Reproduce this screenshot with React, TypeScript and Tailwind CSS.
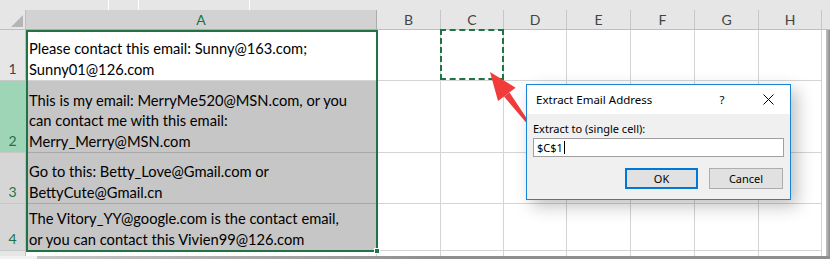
const colWidths = ["w-[26px]"];

type Row = {
  num: string;
  height: string;
  lines: string[];
  head: string;
  cell: string;
};

const rows: Row[] = [
  {
    num: "1",
    height: "h-[51px]",
    lines: ["Please contact this email: Sunny@163.com;", "Sunny01@126.com"],
    head: "bg-[#e6e6e6] text-[#444444]",
    cell: "bg-white border-[#d4d4d4]",
  },
  {
    num: "2",
    height: "h-[72px]",
    lines: [
      "This is my email: MerryMe520@MSN.com, or you",
      "can contact me with this email:",
      "Merry_Merry@MSN.com",
    ],
    head: "bg-[#9fd5b7] text-[#217346]",
    cell: "bg-[#c6c6c6] border-[#a8a8a8]",
  },
  {
    num: "3",
    height: "h-[51px]",
    lines: ["Go to this: Betty_Love@Gmail.com or", "BettyCute@Gmail.cn"],
    head: "bg-[#d6d6d6] text-[#217346]",
    cell: "bg-[#c6c6c6] border-[#a8a8a8]",
  },
  {
    num: "4",
    height: "h-[47px]",
    lines: [
      "The Vitory_YY@google.com is the contact email,",
      "or you can contact this Vivien99@126.com",
    ],
    head: "bg-[#d6d6d6] text-[#217346]",
    cell: "bg-[#c6c6c6] border-[#a8a8a8]",
  },
];

const others = [
  { key: "B", w: "w-[64px]" },
  { key: "C", w: "w-[63px]" },
  { key: "D", w: "w-[63px]" },
  { key: "E", w: "w-[64px]" },
  { key: "F", w: "w-[64px]" },
  { key: "G", w: "w-[64px]" },
  { key: "H", w: "w-[63px]" },
];

function Arrow() {
  return (
    <svg
      className="absolute left-0 top-0 pointer-events-none"
      width="830"
      height="259"
      viewBox="0 0 830 259"
    >
      {/* shaft, tapering toward the dialog */}
      <polygon points="509.5,92.5 504,96.5 531.2,128.6 532.8,127.4" fill="#f23b3b" />
      {/* head */}
      <polygon points="490,72 515.6,87.8 498,101" fill="#f23b3b" />
    </svg>
  );
}

function Dialog() {
  return (
    <div className="absolute left-[526px] top-[84px] w-[265px] h-[116px] border border-[#1883d7] bg-[#f0f0f0] shadow-[6px_6px_16px_rgba(0,0,0,0.25)] font-['Noto_Sans',sans-serif] text-[11px] text-black">
      <div className="h-[29px] bg-white flex items-center pl-[9px] pr-[16px] text-[11.5px]">
        <span className="flex-1 leading-none">Extract Email Address</span>
        <span className="w-[10px] text-center mr-[36px] leading-none">?</span>
        <svg width="11" height="11" viewBox="0 0 11 11">
          <path d="M0.5 0.5 L10.5 10.5 M10.5 0.5 L0.5 10.5" stroke="#000" strokeWidth="1" />
        </svg>
      </div>
      <div className="px-[6px] pt-[8px]">
        <div className="leading-[14px]">Extract to (single cell):</div>
        <div className="mt-[2px] h-[19px] w-[251px] border border-[#a0a0a0] bg-white flex items-center pl-[3px]">
          <span className="leading-none">$C$1</span>
          <span className="ml-[1px] w-px h-[13px] bg-black" />
        </div>
        <div className="mt-[11px] flex justify-end gap-[11px] pr-[1px]">
          <button className="w-[73px] h-[21px] border-2 border-[#0078d7] bg-[#e1e1e1] leading-none">
            OK
          </button>
          <button className="w-[74px] h-[21px] border border-[#adadad] bg-[#e1e1e1] leading-none">
            Cancel
          </button>
        </div>
      </div>
    </div>
  );
}

export default function App() {
  return (
    <div className="relative w-[830px] h-[259px] overflow-hidden bg-white font-['Lato',sans-serif] text-black">
      {/* formula bar remains */}
      <div className="h-[10px] bg-[#e6e6e6] flex">
        <div className="w-[108px]" />
        <div className="w-px bg-white" />
        <div className="w-[29px]" />
        <div className="w-px bg-white" />
        <div className="w-[110px]" />
        <div className="w-px bg-white" />
      </div>

      <div className="flex">
        <div className="flex flex-col">
          {/* column headers */}
          <div className="flex h-[20px] text-[14px]">
            <div className={`${colWidths[0]} relative bg-[#e6e6e6] border-r border-b border-[#bfbfbf]`}>
              <div className="absolute right-[2px] bottom-[2px] w-0 h-0 border-l-[12px] border-l-transparent border-b-[12px] border-b-[#b5b5b5]" />
            </div>
            <div className="w-[351px] bg-[#d2d2d2] border-r border-b border-[#ababab] text-[#217346] flex items-center justify-center">
              A
            </div>
            {others.map((c) => (
              <div
                key={c.key}
                className={`${c.w} bg-[#e6e6e6] border-r border-b border-[#c6c6c6] border-b-[#bfbfbf] text-[#444444] flex items-center justify-center`}
              >
                {c.key}
              </div>
            ))}
          </div>

          {/* body rows */}
          {rows.map((r) => (
            <div key={r.num} className={`flex ${r.height}`}>
              <div
                className={`w-[26px] ${r.head} border-r border-b border-r-[#bfbfbf] border-b-[#c8c8c8] flex items-end justify-center pb-[1px] text-[14px] leading-[20px]`}
              >
                {r.num}
              </div>
              <div
                className={`w-[351px] ${r.cell} border-b flex flex-col justify-end pl-[3px] pb-[1px] text-[14.7px] leading-[20.5px] whitespace-nowrap`}
              >
                {r.lines.map((l) => (
                  <div key={l}>{l}</div>
                ))}
              </div>
              {others.map((c) => (
                <div
                  key={c.key}
                  className={`${c.w} border-r border-b border-[#d4d4d4]`}
                >
                  {r.num === "1" && c.key === "C" && (
                    <div className="w-[64px] h-[51px] -ml-px -mt-px border-2 border-dashed border-[#217346]" />
                  )}
                </div>
              ))}
            </div>
          ))}

          {/* partial row 5 */}
          <div className="flex h-[5px]">
            <div className="w-[26px] bg-[#e6e6e6] border-r border-[#bfbfbf]" />
            <div className="w-[351px] border-r border-[#d4d4d4]" />
            {others.map((c) => (
              <div key={c.key} className={`${c.w} border-r border-[#d4d4d4]`} />
            ))}
          </div>
        </div>

        {/* right edge with window shadow */}
        <div className="flex flex-col w-[8px]">
          <div className="h-[20px] bg-[#e6e6e6] border-b border-[#bfbfbf]" />
          <div className="flex-1 flex">
            <div className="w-[4px] bg-white" />
            <div className="w-[4px] bg-gradient-to-r from-[#c4c4c4] to-[#8c8c8c]" />
          </div>
        </div>
      </div>

      {/* bottom shadow */}
      <div className="h-[3px] flex">
        <div className="w-[37px] bg-[#f2f2f2]" />
        <div className="flex-1 bg-gradient-to-r from-[#c8c8c8] via-[#8f8f8f] to-[#8f8f8f]" />
      </div>

      {/* selection outline around A1:A4 */}
      <div className="absolute left-[26px] top-[30px] w-[352px] h-[222px] border-2 border-[#217346] pointer-events-none">
        <div className="absolute -right-[4px] -bottom-[4px] w-[6px] h-[6px] bg-[#217346] border border-white" />
      </div>

      <Arrow />
      <Dialog />
    </div>
  );
}
